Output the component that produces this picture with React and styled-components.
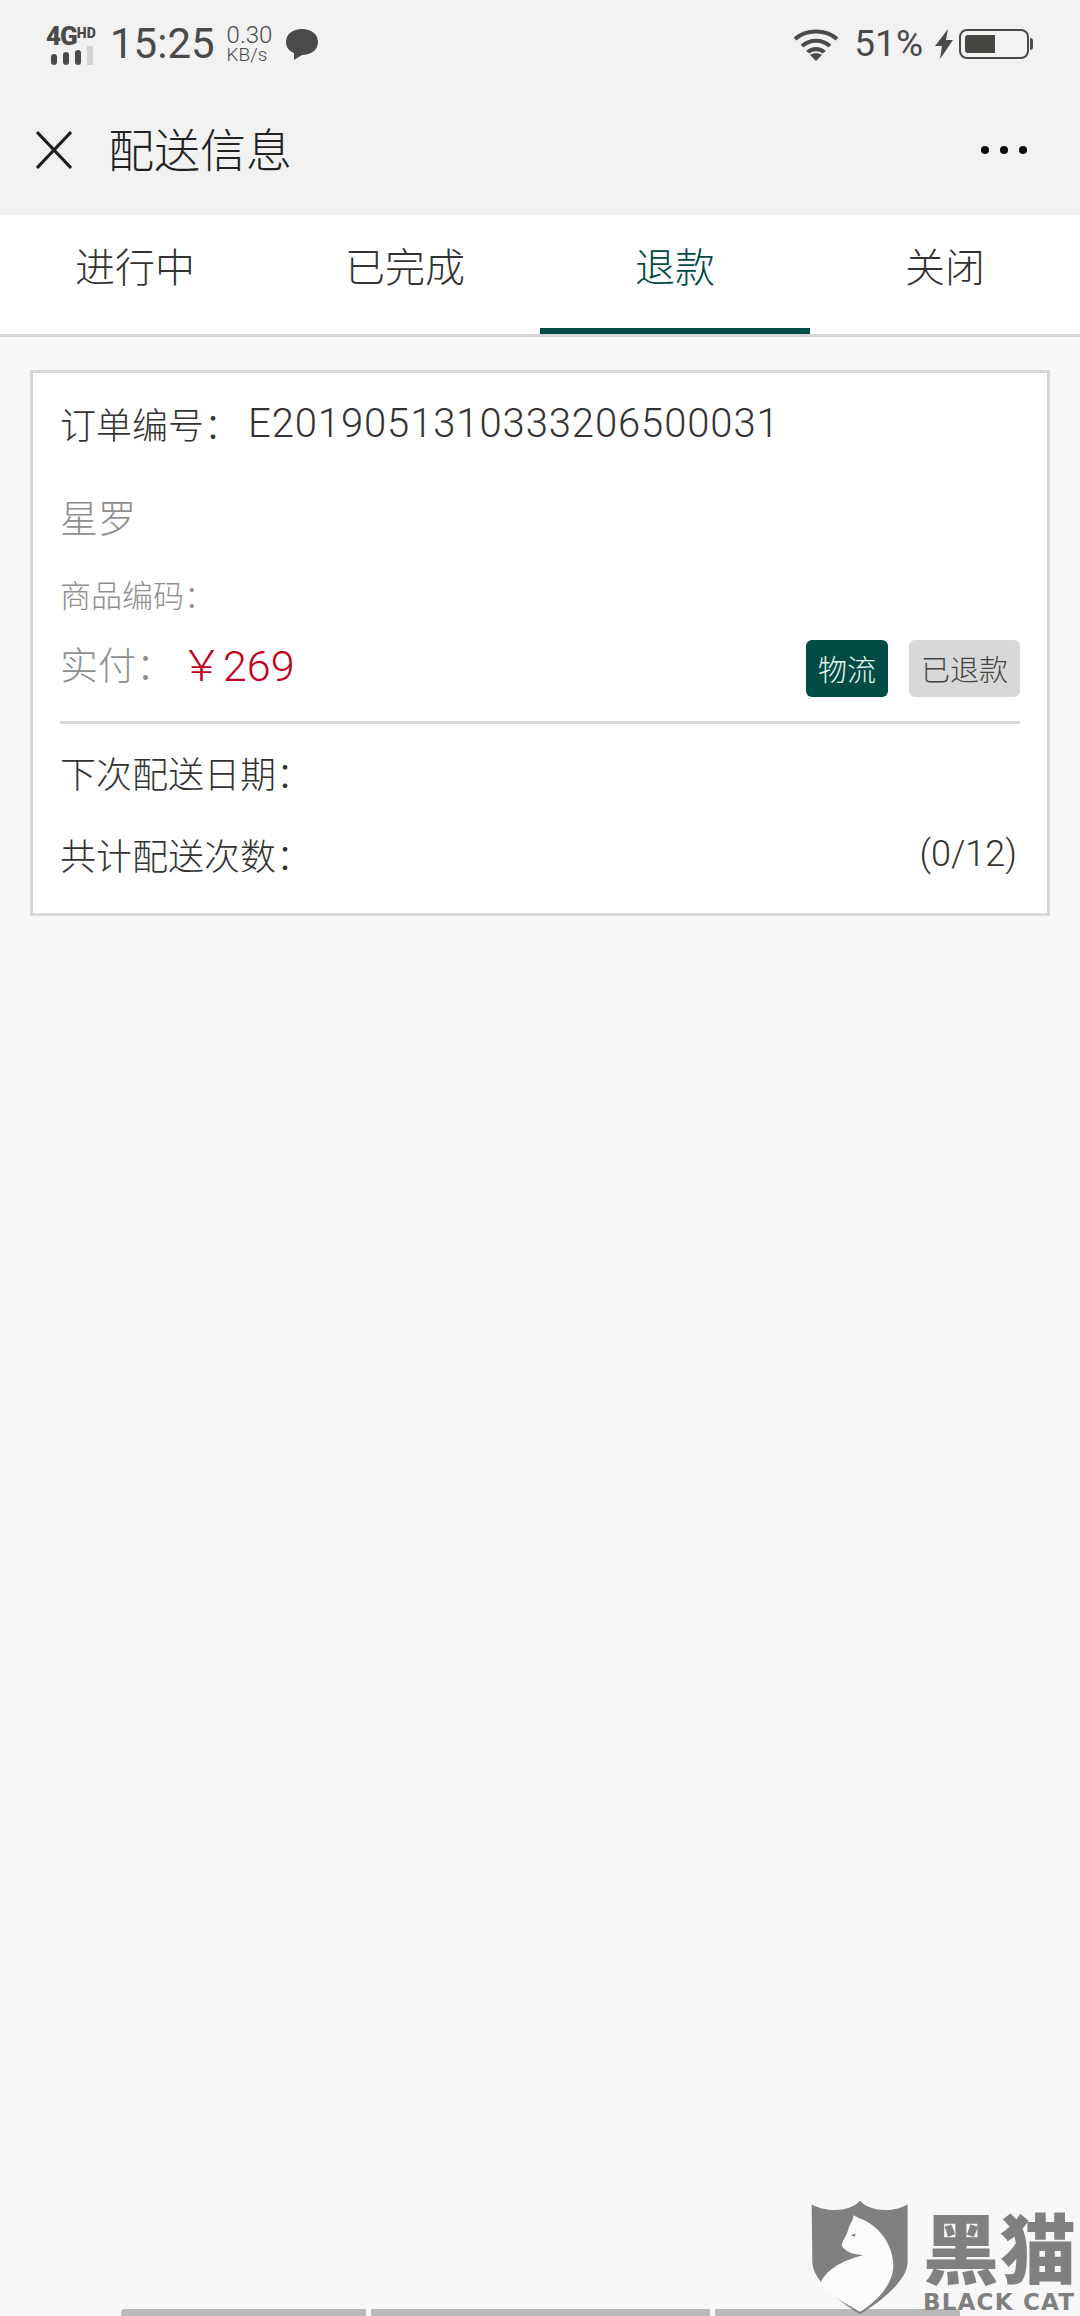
import styled, { createGlobalStyle } from 'styled-components';

const GlobalStyle = createGlobalStyle`
html, body {
    margin: 0;
    padding: 0;
    background: #f8f8f8;
}
* {
    box-sizing: border-box;
}
`;

const FONT = `Roboto, "Noto Sans CJK SC", sans-serif`;

function App() {
    return (
        <Page>
            <GlobalStyle />
            <Top>
                <StatusBar>
                    <StatusLeft>
                        <Network>
                            <NetworkText>4G<small>HD</small></NetworkText>
                            <Signal>
                                <i /><i /><i /><i className="off" />
                            </Signal>
                        </Network>
                        <Clock>15:25</Clock>
                        <Speed>
                            <span>0.30</span>
                            <small>KB/s</small>
                        </Speed>
                        <svg width="34" height="33" viewBox="0 0 34 33">
                            <path d="M17 1C8 1 1 6 1 14c0 5 3 9 8 11l0 7 8-5c9 0 16-5 16-13S26 1 17 1z" fill="#4a4a4a" />
                        </svg>
                    </StatusLeft>
                    <StatusRight>
                        <svg width="46" height="33" viewBox="0 0 46 33">
                            <g fill="none" stroke="#4a4a4a" strokeWidth="4">
                                <path d="M2 11C13 1 33 1 44 11" />
                                <path d="M9 18C17 11 29 11 37 18" />
                            </g>
                            <path d="M13 23C19 17.500 27 17.500 33 23L29.500 25.500C26 22.500 20 22.500 16.500 25.500z" fill="#4a4a4a" />
                            <path d="M17 27C20 24.500 26 24.500 29 27L23 33z" fill="#4a4a4a" />
                        </svg>
                        <Percent>51%</Percent>
                        <svg width="19" height="30" viewBox="0 0 19 30">
                            <path d="M13 0L0 17h7L5 30 18 11h-7z" fill="#4a4a4a" />
                        </svg>
                        <Battery>
                            <BatteryLevel style={{ width: '51%' }} />
                        </Battery>
                    </StatusRight>
                </StatusBar>
                <Header>
                    <svg width="36" height="38" viewBox="0 0 36 38">
                        <path d="M1 1L35 37M35 1L1 37" fill="none" stroke="#1c1c1c" strokeWidth="3" />
                    </svg>
                    <Title>配送信息</Title>
                    <Dots><i /><i /><i /></Dots>
                </Header>
            </Top>
            <Tabs>
                <Tab>进行中</Tab>
                <Tab>已完成</Tab>
                <Tab className="active">退款</Tab>
                <Tab>关闭</Tab>
            </Tabs>
            <Card>
                <OrderRow>订单编号：<OrderNo>E2019051310333206500031</OrderNo></OrderRow>
                <NameRow>星罗</NameRow>
                <CodeRow>商品编码：</CodeRow>
                <PayRow>
                    <PayLabel>实付：</PayLabel>
                    <Price>￥269</Price>
                    <Tag $variant="green">物流</Tag>
                    <Tag $variant="grey">已退款</Tag>
                </PayRow>
                <Divider />
                <InfoRow $height={95}>下次配送日期：</InfoRow>
                <InfoRow $height={70}>共计配送次数：<Count>(0/12)</Count></InfoRow>
            </Card>
            <BottomBars>
                <Bar $width={245} className="first" />
                <Bar $width={339} />
                <Bar $width={245} className="last" />
            </BottomBars>
            <Watermark>
                <svg width="100" height="117" viewBox="150 70 300 350">
                    <path d="M155 85C185 105 265 115 300 75C335 115 415 105 443 85L443 260C440 320 350 385 300 415C250 385 160 320 157 260z" fill="#808080" />
                    <path d="M280 118L300 128C360 150 400 210 400 270C400 330 340 385 300 408C260 385 205 355 180 325C195 285 240 255 310 238C290 235 275 235 265 228C255 220 245 215 245 205C250 190 262 175 265 160C268 145 280 135 280 118z" fill="#fbfbfb" />
                    <path d="M273 178L287 172L285 183z" fill="#808080" />
                </svg>
                <Brand>
                    <BrandName>黑猫</BrandName>
                    <BrandLatin>BLACK CAT</BrandLatin>
                </Brand>
            </Watermark>
        </Page>
    );
}

const Page = styled.div`
position: relative;
display: flex;
flex-direction: column;
width: 1080px;
height: 2316px;
overflow: hidden;
background: #f8f8f8;
font-family: ${FONT};
`;

const Top = styled.div`
background: #f2f2f2;
height: 215px;
`;

const StatusBar = styled.div`
display: flex;
justify-content: space-between;
align-items: center;
height: 88px;
padding: 0 51px 0 46px;
color: #4a4a4a;
`;

const StatusLeft = styled.div`
display: flex;
align-items: center;
`;

const Network = styled.div`
display: flex;
flex-direction: column;
width: 50px;
margin-right: 14px;
`;

const NetworkText = styled.div`
font-size: 26px;
line-height: 20px;
font-weight: 900;
letter-spacing: -1px;
white-space: nowrap;
small {
    font-size: 14px;
    vertical-align: 7px;
    letter-spacing: 0;
}
`;

const Signal = styled.div`
display: flex;
gap: 6px;
align-items: flex-end;
height: 19px;
padding-left: 5px;
i {
    width: 6px;
    height: 11px;
    border-radius: 3px;
    background: #4a4a4a;
}
i:nth-child(2) { height: 13px; }
i:nth-child(3) { height: 15px; }
i.off {
    height: 19px;
    border-radius: 0;
    background: #d2d2d2;
}
`;

const Clock = styled.div`
font-size: 42px;
line-height: 48px;
font-weight: 400;
margin-right: 12px;
`;

const Speed = styled.div`
display: flex;
flex-direction: column;
margin-right: 13px;
font-weight: 300;
span {
    font-size: 24px;
    line-height: 21px;
}
small {
    font-size: 19px;
    line-height: 18px;
}
`;

const StatusRight = styled.div`
display: flex;
align-items: center;
`;

const Percent = styled.div`
font-size: 37px;
line-height: 40px;
font-weight: 400;
margin: 0 12px 0 15px;
`;

const Battery = styled.div`
position: relative;
width: 70px;
height: 30px;
margin-left: 5px;
padding: 4px;
border: 2px solid #4a4a4a;
border-radius: 8px;
&::after {
    content: '';
    position: absolute;
    right: -6px;
    top: 7px;
    width: 3px;
    height: 12px;
    border-radius: 0 3px 3px 0;
    background: #4a4a4a;
}
`;

const BatteryLevel = styled.div`
height: 100%;
background: #454541;
border-radius: 3px 0 0 3px;
`;

const Header = styled.div`
display: flex;
align-items: center;
height: 127px;
padding: 0 53px 3px 36px;
`;

const Title = styled.div`
flex: 1;
margin-left: 36px;
padding-bottom: 7px;
font-size: 46px;
font-weight: 300;
color: #222;
`;

const Dots = styled.div`
display: flex;
gap: 11px;
i {
    width: 8px;
    height: 8px;
    border-radius: 50%;
    background: #0c0c0c;
}
`;

const Tabs = styled.div`
display: grid;
grid-template-columns: repeat(4, 1fr);
height: 122px;
background: #fff;
border-bottom: 3px solid #d8d8d8;
`;

const Tab = styled.div`
position: relative;
display: flex;
align-items: center;
justify-content: center;
height: 119px;
padding-bottom: 20px;
font-size: 40px;
font-weight: 300;
color: #333;
&.active {
    color: #004b43;
}
&.active::after {
    content: '';
    position: absolute;
    left: 0;
    right: 0;
    bottom: 0;
    height: 6px;
    background: #004b43;
}
`;

const Card = styled.div`
margin: 33px 30px 0;
padding: 0 27px 24px;
background: #fff;
border: 3px solid #d8d8d8;
font-size: 36px;
font-weight: 300;
color: #333;
`;

const OrderRow = styled.div`
display: flex;
align-items: center;
height: 100px;
white-space: nowrap;
`;

const OrderNo = styled.span`
margin-left: 8px;
font-size: 40px;
letter-spacing: 0.9px;
`;

const NameRow = styled.div`
display: flex;
align-items: center;
height: 84px;
font-size: 38px;
color: #8f8f8f;
`;

const CodeRow = styled.div`
display: flex;
align-items: center;
height: 72px;
font-size: 31px;
color: #8f8f8f;
`;

const PayRow = styled.div`
display: flex;
align-items: center;
height: 66px;
`;

const PayLabel = styled.span`
font-size: 38px;
color: #8f8f8f;
`;

const Price = styled.span`
flex: 1;
margin-left: 6px;
font-size: 43px;
color: #c10020;
`;

const Tag = styled.div`
display: flex;
align-items: center;
justify-content: center;
height: 57px;
margin: 12px 0 0 21px;
padding: 0 12px;
border-radius: 6px;
font-size: 29px;
background: ${props => props.$variant === 'green' ? '#004b43' : '#d8d8d8'};
color: ${props => props.$variant === 'green' ? '#e9f7f2' : '#444'};
`;

const Divider = styled.div`
height: 3px;
margin-top: 26px;
background: #d8d8d8;
`;

const InfoRow = styled.div`
display: flex;
align-items: center;
justify-content: space-between;
height: ${props => props.$height}px;
`;

const Count = styled.span`
font-size: 36px;
margin-right: 3px;
`;

const BottomBars = styled.div`
display: flex;
gap: 5px;
height: 7px;
margin-top: auto;
padding-left: 121px;
`;

const Bar = styled.div`
width: ${props => props.$width}px;
background: #b9b9b9;
&.first { border-radius: 4px 0 0 0; }
&.last { border-radius: 0 4px 0 0; }
`;

const Watermark = styled.div`
position: absolute;
left: 810px;
top: 2199px;
display: flex;
gap: 13px;
`;

const Brand = styled.div`
display: flex;
flex-direction: column;
padding-top: 18px;
color: #808080;
`;

const BrandName = styled.div`
font-size: 76px;
line-height: 70px;
height: 73px;
font-weight: 900;
letter-spacing: 1px;
white-space: nowrap;
`;

const BrandLatin = styled.div`
font-family: "DejaVu Sans", sans-serif;
font-size: 23px;
line-height: 24px;
font-weight: 700;
letter-spacing: 1.2px;
white-space: nowrap;
`;

export default App;
